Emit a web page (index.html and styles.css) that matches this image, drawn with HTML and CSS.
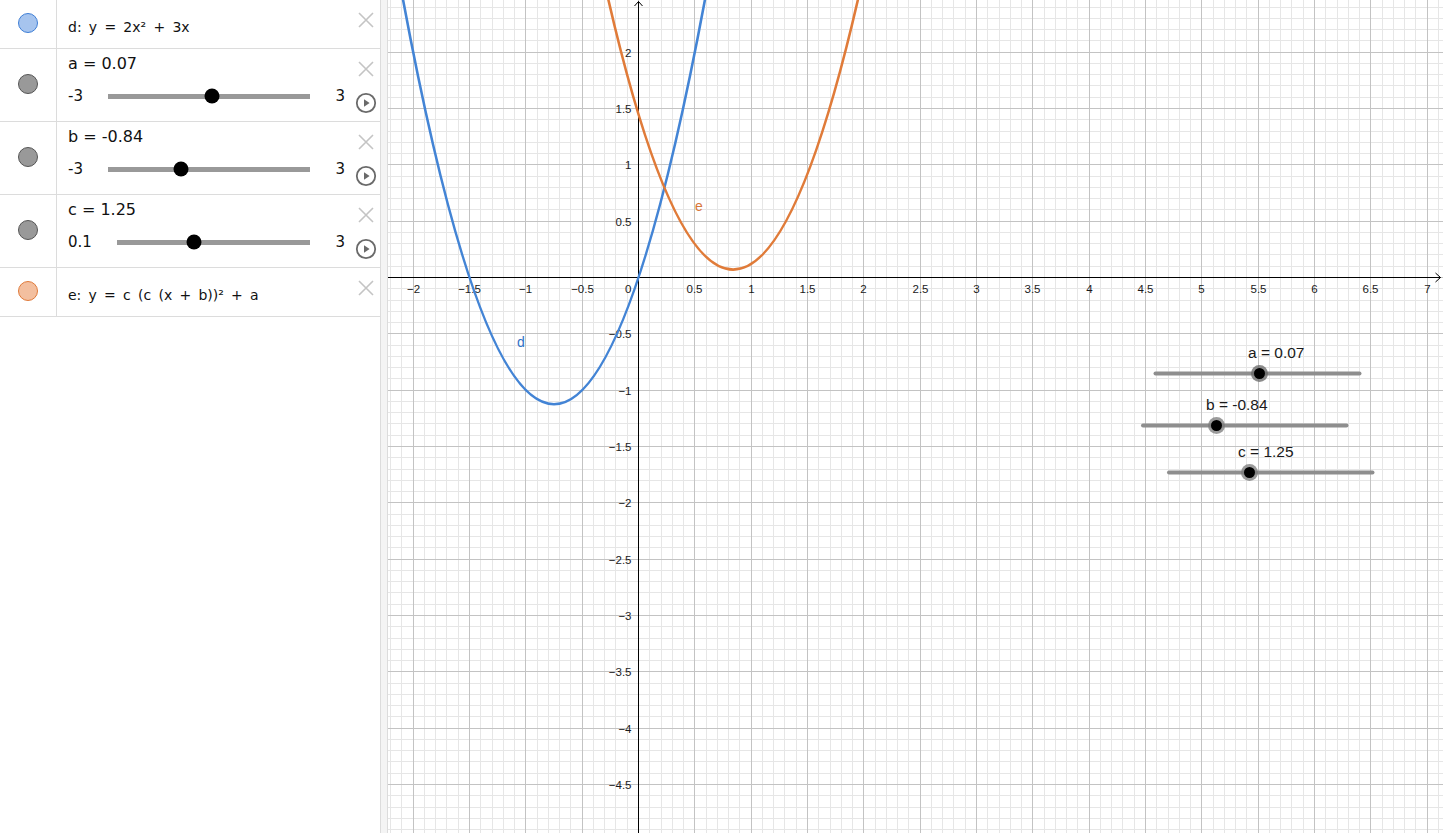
FILE: index.html
```html
<!DOCTYPE html>
<html lang="en">
<head>
<meta charset="utf-8">
<title>Graphing</title>
<link rel="stylesheet" href="styles.css">
</head>
<body>
<div class="app">
  <aside class="algebra">
    <div class="row row-short">
      <div class="marker-cell"><span class="dot dot-blue"></span></div>
      <div class="content content-short"><div class="formula">d: y = 2x² + 3x</div></div>
      <div class="actions">
        <svg class="close" width="16" height="16" viewBox="0 0 16 16"><path d="M1 1L15 15M15 1L1 15"/></svg>
      </div>
    </div>
    <div class="row row-slider">
      <div class="marker-cell"><span class="dot dot-gray"></span></div>
      <div class="content">
        <div class="value">a = 0.07</div>
        <div class="slider"><span class="bound">-3</span><div class="track"><span class="thumb" style="left:51.17%"></span></div><span class="bound">3</span></div>
      </div>
      <div class="actions">
        <svg class="close" width="16" height="16" viewBox="0 0 16 16"><path d="M1 1L15 15M15 1L1 15"/></svg>
        <svg class="play" width="22" height="22" viewBox="0 0 22 22"><circle cx="11" cy="11" r="9.2"/><path d="M9 7.3L14.6 11L9 14.7Z"/></svg>
      </div>
    </div>
    <div class="row row-slider">
      <div class="marker-cell"><span class="dot dot-gray"></span></div>
      <div class="content">
        <div class="value">b = -0.84</div>
        <div class="slider"><span class="bound">-3</span><div class="track"><span class="thumb" style="left:36%"></span></div><span class="bound">3</span></div>
      </div>
      <div class="actions">
        <svg class="close" width="16" height="16" viewBox="0 0 16 16"><path d="M1 1L15 15M15 1L1 15"/></svg>
        <svg class="play" width="22" height="22" viewBox="0 0 22 22"><circle cx="11" cy="11" r="9.2"/><path d="M9 7.3L14.6 11L9 14.7Z"/></svg>
      </div>
    </div>
    <div class="row row-slider">
      <div class="marker-cell"><span class="dot dot-gray"></span></div>
      <div class="content">
        <div class="value">c = 1.25</div>
        <div class="slider"><span class="bound">0.1</span><div class="track"><span class="thumb" style="left:39.66%"></span></div><span class="bound">3</span></div>
      </div>
      <div class="actions">
        <svg class="close" width="16" height="16" viewBox="0 0 16 16"><path d="M1 1L15 15M15 1L1 15"/></svg>
        <svg class="play" width="22" height="22" viewBox="0 0 22 22"><circle cx="11" cy="11" r="9.2"/><path d="M9 7.3L14.6 11L9 14.7Z"/></svg>
      </div>
    </div>
    <div class="row row-short">
      <div class="marker-cell"><span class="dot dot-orange"></span></div>
      <div class="content content-short"><div class="formula">e: y = c (c (x + b))² + a</div></div>
      <div class="actions">
        <svg class="close" width="16" height="16" viewBox="0 0 16 16"><path d="M1 1L15 15M15 1L1 15"/></svg>
      </div>
    </div>
  </aside>
  <div class="splitter"></div>
  <main class="graphics">
    <svg id="graph" width="1055" height="833" viewBox="0 0 1055 833">
      <g id="grid"></g>
      <g id="axes"></g>
      <g transform="matrix(112.67 0 0 -112.67 250.5 277.5)">
        <path class="curve curve-d" d="M-2.2 3.08Q-0.75 -5.33 0.7 3.08"/>
        <path class="curve curve-e" d="M-0.4 3.0731Q0.84 -2.9331 2.08 3.0731"/>
      </g>
      <text class="curve-label label-d" x="129" y="346.5">d</text>
      <text class="curve-label label-e" x="307" y="210.5">e</text>
      <g class="gslider">
        <text x="860" y="357.7">a = 0.07</text>
        <line x1="767.5" y1="373.5" x2="971.5" y2="373.5"/>
        <circle class="halo halo-active" cx="871.5" cy="373.5" r="8.5"/>
        <circle class="knob" cx="871.5" cy="373.5" r="5.5"/>
      </g>
      <g class="gslider">
        <text x="818" y="410">b = -0.84</text>
        <line x1="755" y1="425.5" x2="958.5" y2="425.5"/>
        <circle class="halo" cx="828.5" cy="425.5" r="8.5"/>
        <circle class="knob" cx="828.5" cy="425.5" r="5.5"/>
      </g>
      <g class="gslider">
        <text x="850" y="456.7">c = 1.25</text>
        <line x1="781" y1="472.5" x2="984.5" y2="472.5"/>
        <circle class="halo" cx="861.5" cy="472.5" r="8.5"/>
        <circle class="knob" cx="861.5" cy="472.5" r="5.5"/>
      </g>
    </svg>
  </main>
</div>
<script src="graph.js"></script>
</body>
</html>
```

FILE: styles.css
```css
* { box-sizing: border-box; }
html, body { margin: 0; padding: 0; background: #fff; overflow: hidden; }
.app {
  display: flex;
  width: 1443px;
  height: 833px;
  font-family: "DejaVu Sans", "Liberation Sans", sans-serif;
  color: #111;
}
.algebra {
  width: 381px;
  height: 833px;
  border-right: 1px solid #dcdcdc;
  background: #fff;
  display: flex;
  flex-direction: column;
}
.row {
  display: flex;
  border-bottom: 1px solid #dcdcdc;
}
.row-short { height: 49px; }
.row-slider { height: 73px; }
.marker-cell {
  width: 57px;
  border-right: 1px solid #dcdcdc;
  display: flex;
  align-items: center;
  justify-content: center;
  padding-bottom: 3px;
}
.dot {
  display: block;
  width: 20px;
  height: 20px;
  border-radius: 50%;
  border: 1px solid #5a5a5a;
  background: #9a9a9a;
}
.dot-blue { background: #a6c4ee; border-color: #3f7fd6; }
.dot-gray { background: #999; border-color: #555; }
.dot-orange { background: #f3bf9f; border-color: #e07a3a; }
.content {
  flex: 1;
  padding: 5px 7px 0 11px;
  min-width: 0;
}
.content-short {
  display: flex;
  align-items: center;
  padding-top: 5px;
}
.formula {
  font-size: 14px;
  line-height: 16px;
  white-space: nowrap;
  word-spacing: 2.8px;
}
.value {
  font-size: 16px;
  line-height: 20px;
  white-space: nowrap;
}
.slider {
  display: flex;
  align-items: center;
  gap: 25px;
  height: 20px;
  margin-top: 12px;
}
.bound {
  font-size: 15px;
  line-height: 20px;
}
.track {
  flex: 1;
  height: 5px;
  background: #999;
  position: relative;
}
.thumb {
  position: absolute;
  top: 50%;
  width: 15px;
  height: 15px;
  border-radius: 50%;
  background: #000;
  transform: translate(-50%, -50%);
}
.actions {
  width: 28px;
  display: flex;
  flex-direction: column;
  align-items: center;
  padding-top: 12px;
}
.close path { stroke: #c4c4c4; stroke-width: 1.6; fill: none; }
.play { margin-top: 15px; }
.play circle { fill: none; stroke: #6a6a6a; stroke-width: 1.8; }
.play path { fill: #6a6a6a; }
.splitter {
  width: 7px;
  height: 833px;
  background: #f4f4f4;
  border-right: 1px solid #dcdcdc;
}
.graphics {
  flex: 1;
  height: 833px;
  overflow: hidden;
}
#graph { display: block; }
.grid-minor { stroke: #e6e6e6; stroke-width: 1; fill: none; }
.grid-major { stroke: #c3c3c3; stroke-width: 1; fill: none; }
.axis { stroke: #000; stroke-width: 1; fill: none; }
.axis-label {
  font-family: "Liberation Sans", Arial, sans-serif;
  font-size: 11.5px;
  fill: #1a1a1a;
}
.curve {
  fill: none;
  stroke-width: 2.6;
  vector-effect: non-scaling-stroke;
  stroke-linecap: round;
}
.curve-d { stroke: #4384d5; }
.curve-e { stroke: #e07b39; }
.curve-label {
  font-family: "Liberation Sans", Arial, sans-serif;
  font-size: 14px;
}
.label-d { fill: #2f72c8; }
.label-e { fill: #d9773a; }
.gslider text {
  font-family: "Liberation Sans", Arial, sans-serif;
  font-size: 15.5px;
  fill: #1a1a1a;
}
.gslider line {
  stroke: #8e8e8e;
  stroke-width: 4;
  stroke-linecap: round;
}
.gslider .halo { fill: #7a7a7a; opacity: 0.75; }
.gslider .halo-active { fill: #666; }
.gslider .knob { fill: #000; }
```

FILE: graph.js
```js
(function () {
  var NS = 'http://www.w3.org/2000/svg';
  var W = 1055, H = 833, OX = 250.5, OY = 277.5, S = 112.67, m = S / 10;
  var grid = document.getElementById('grid');
  var axes = document.getElementById('axes');

  function el(name, attrs, parent, text) {
    var e = document.createElementNS(NS, name);
    for (var k in attrs) e.setAttribute(k, attrs[k]);
    if (text != null) e.textContent = text;
    parent.appendChild(e);
    return e;
  }
  function px(v) { return Math.floor(v) + 0.5; }
  function fmt(v) {
    var s = String(Math.round(Math.abs(v) * 10) / 10);
    return (v < 0 ? '\u2212' : '') + s;
  }

  var minor = '', major = '';
  var i, x, y, seg;
  for (i = -23; i <= 72; i++) {
    x = px(OX + i * m);
    if (x < 0 || x > W) continue;
    seg = 'M' + x + ' 0V' + H;
    if (i % 5 === 0) major += seg; else minor += seg;
  }
  for (i = -50; i <= 25; i++) {
    y = px(OY - i * m);
    if (y < 0 || y > H) continue;
    seg = 'M0 ' + y + 'H' + W;
    if (i % 5 === 0) major += seg; else minor += seg;
  }
  el('path', { d: minor, 'class': 'grid-minor' }, grid);
  el('path', { d: major, 'class': 'grid-major' }, grid);

  el('path', { d: 'M0 277.5H1052.5', 'class': 'axis' }, axes);
  el('path', { d: 'M1047.5 273L1052.5 277.5L1047.5 282', 'class': 'axis' }, axes);
  el('path', { d: 'M250.5 833V1.5', 'class': 'axis' }, axes);
  el('path', { d: 'M246.5 6L250.5 1.5L254.5 6', 'class': 'axis' }, axes);

  var k;
  for (k = -4; k <= 14; k++) {
    if (k === 0) continue;
    x = px(OX + k * 5 * m);
    el('text', { x: x, y: 293, 'text-anchor': 'middle', 'class': 'axis-label' }, axes, fmt(k * 0.5));
  }
  for (k = 4; k >= -9; k--) {
    if (k === 0) continue;
    y = px(OY - k * 5 * m) + 4.5;
    el('text', { x: 243.5, y: y, 'text-anchor': 'end', 'class': 'axis-label' }, axes, fmt(k * 0.5));
  }
  el('text', { x: 243.5, y: 293, 'text-anchor': 'end', 'class': 'axis-label' }, axes, '0');
})();
```
